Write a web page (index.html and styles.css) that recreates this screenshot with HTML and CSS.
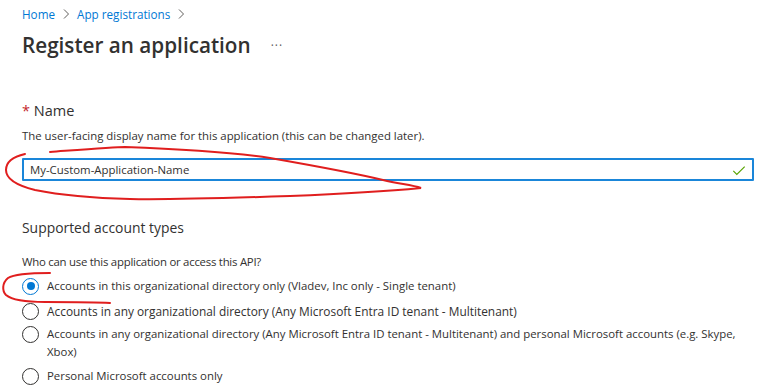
FILE: index.html
```html
<!DOCTYPE html>
<html lang="en">
<head>
<meta charset="utf-8">
<title>Register an application</title>
<link rel="stylesheet" href="styles.css">
</head>
<body>
<div class="page">
  <nav class="crumbs">
    <a class="crumb" href="#">Home</a>
    <svg class="chev" viewBox="0 0 8 12" width="8" height="12"><path d="M2 1.5 L6.5 6 L2 10.5" fill="none" stroke="#605e5c" stroke-width="1"/></svg>
    <a class="crumb" href="#">App registrations</a>
    <svg class="chev" viewBox="0 0 8 12" width="8" height="12"><path d="M2 1.5 L6.5 6 L2 10.5" fill="none" stroke="#605e5c" stroke-width="1"/></svg>
  </nav>
  <header class="title-row">
    <h1 class="title">Register an application</h1>
    <span class="more">···</span>
  </header>

  <section class="name-section">
    <div class="label"><span class="req">*</span> Name</div>
    <p class="help">The user-facing display name for this application (this can be changed later).</p>
    <div class="input">
      <span class="value">My-Custom-Application-Name</span>
      <svg class="check" viewBox="0 0 16 12" width="14" height="11"><path d="M1.5 6.5 L5.5 10.5 L14.5 1.5" fill="none" stroke="#57a300" stroke-width="1.3"/></svg>
    </div>
  </section>

  <section class="types-section">
    <h2 class="subhead">Supported account types</h2>
    <p class="question">Who can use this application or access this API?</p>
    <div class="radios">
      <div class="radio r1 checked"><span class="circle"></span><span class="rtext">Accounts in this organizational directory only (Vladev, Inc only - Single tenant)</span></div>
      <div class="radio r2"><span class="circle"></span><span class="rtext">Accounts in any organizational directory (Any Microsoft Entra ID tenant - Multitenant)</span></div>
      <div class="radio r3"><span class="circle"></span><span class="rtext">Accounts in any organizational directory (Any Microsoft Entra ID tenant - Multitenant) and personal Microsoft accounts (e.g. Skype,<br>Xbox)</span></div>
      <div class="radio r4"><span class="circle"></span><span class="rtext">Personal Microsoft accounts only</span></div>
    </div>
  </section>

  <svg class="annot" viewBox="0 0 768 391" width="768" height="391">
    <path d="M50 152 C 90 149, 115 147, 125 147 C 180 149, 230 152, 270 158 C 310 165, 350 172, 383 180 C 400 184, 412 185, 421 188 C 390 191, 340 194, 290 196 C 230 198, 170 200, 130 199 C 90 198, 60 195, 35 190 C 15 185, 6 178, 6 170 C 6 162, 12 157, 25 154" fill="none" stroke="#e01e1e" stroke-width="2" stroke-linecap="round"/>
    <path d="M50 273 C 30 273, 14 274, 8 278 C 2 283, 2 291, 6 295 C 12 300, 25 302, 45 302 C 70 302, 95 302, 110 303" fill="none" stroke="#e01e1e" stroke-width="2" stroke-linecap="round"/>
  </svg>
</div>
</body>
</html>
```

FILE: styles.css
```css
* { box-sizing: border-box; }
html, body { margin: 0; padding: 0; background: #ffffff; }
body {
  font-family: "Open Sans", "Noto Sans", sans-serif;
  color: #323130;
  width: 768px;
  height: 391px;
  overflow: hidden;
}
.page {
  position: relative;
  padding: 5px 14px 0 22px;
  height: 391px;
}
.crumbs {
  display: flex;
  align-items: center;
  gap: 4px;
  height: 18px;
  font-size: 11.7px;
}
.crumb { color: #0078d4; text-decoration: none; }
.chev { margin: 0 3px; }
.title-row {
  display: flex;
  align-items: center;
  height: 44px;
}
.title {
  margin: 0;
  font-size: 20.7px;
  font-weight: 600;
  color: #323130;
}
.more {
  margin-left: 20px;
  color: #605e5c;
  font-size: 12px;
  letter-spacing: 1px;
}
.name-section { margin-top: 34px; }
.label { font-size: 14.5px; line-height: 20px; }
.req { color: #c4262c; }
.help { margin: 6px 0 0; font-size: 11.4px; line-height: 18px; }
.input {
  margin-top: 13px;
  height: 23px;
  width: 732px;
  border: 2px solid #1a86d9;
  border-radius: 1px;
  display: flex;
  align-items: center;
  justify-content: space-between;
  padding: 0 6px;
  font-size: 11.4px;
}
.check { margin-top: 1px; }
.types-section { margin-top: 37px; }
.subhead { margin: 0; font-size: 13.9px; font-weight: 400; line-height: 20px; }
.question { margin: 15px 0 0; font-size: 11.4px; line-height: 18px; letter-spacing: -0.25px; }
.radios { margin-top: 6px; display: flex; flex-direction: column; }
.radio {
  display: flex;
  align-items: flex-start;
  gap: 8px;
  font-size: 11.4px;
  line-height: 18px;
}
.r1 { min-height: 25px; }
.r2 { min-height: 23px; font-size: 11.9px; }
.r3 { min-height: 42px; }
.circle {
  flex: none;
  width: 17px;
  height: 17px;
  border: 1px solid #323130;
  border-radius: 50%;
  margin-top: 0.5px;
  position: relative;
}
.radio.checked .circle { border-color: #0078d4; }
.radio.checked .circle::after {
  content: "";
  position: absolute;
  left: 3.5px; top: 3.5px;
  width: 8px; height: 8px;
  border-radius: 50%;
  background: #0078d4;
}
.annot {
  position: absolute;
  left: 0; top: 0;
  pointer-events: none;
}
```
